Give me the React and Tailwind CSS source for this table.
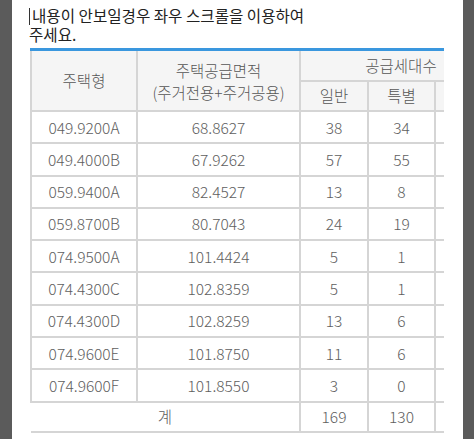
import React from "react";

const rows = [
  ["049.9200A", "68.8627", "38", "34"],
  ["049.4000B", "67.9262", "57", "55"],
  ["059.9400A", "82.4527", "13", "8"],
  ["059.8700B", "80.7043", "24", "19"],
  ["074.9500A", "101.4424", "5", "1"],
  ["074.4300C", "102.8359", "5", "1"],
  ["074.4300D", "102.8259", "13", "6"],
  ["074.9600E", "101.8750", "11", "6"],
  ["074.9600F", "101.8550", "3", "0"],
];

const cell = "border-2 border-[#d5d5d5] text-center p-0";

const App = () => {
  return (
    <div
      className="flex w-[474px] h-[439px] bg-[#5b5b5b] overflow-hidden"
      style={{ fontFamily: '"Noto Sans CJK KR", "Noto Sans", sans-serif' }}
    >
      <div className="ml-[12px] w-[451px] h-full bg-white pl-[17px] pt-[6px]">
        <div className="flex items-start">
          <span className="w-px h-[17px] mt-[2px] bg-[#333] mr-[2px] shrink-0"></span>
          <p className="text-[15.6px] leading-[19px] text-[#222]">
            내용이 안보일경우 좌우 스크롤을 이용하여
            <br />
            <span className="-ml-[3px]">주세요.</span>
          </p>
        </div>
        <div className="mt-[4px] ml-[1px] w-[414px] overflow-hidden border-t-[3px] border-[#3a97de]">
          <table className="border-collapse table-fixed w-[471px] text-[15.5px] font-light text-[#5e5e5e]">
            <colgroup>
              <col className="w-[106px]" />
              <col className="w-[163px]" />
              <col className="w-[68px]" />
              <col className="w-[67px]" />
              <col className="w-[67px]" />
            </colgroup>
            <thead className="bg-[#f5f5f5] text-[#555]">
              <tr className="h-[30px]">
                <th rowSpan={2} className={`${cell} border-t-0 font-light`}>
                  주택형
                </th>
                <th rowSpan={2} className={`${cell} border-t-0 font-light leading-[22px]`}>
                  주택공급면적
                  <br />
                  (주거전용+주거공용)
                </th>
                <th colSpan={3} className={`${cell} border-t-0 font-light`}>
                  공급세대수
                </th>
              </tr>
              <tr className="h-[30px]">
                <th className={`${cell} font-light`}>일반</th>
                <th className={`${cell} font-light`}>특별</th>
                <th className={cell}></th>
              </tr>
            </thead>
            <tbody>
              {rows.map((r) => (
                <tr key={r[0]} className="h-[32.3px]">
                  <td className={cell}>{r[0]}</td>
                  <td className={cell}>{r[1]}</td>
                  <td className={cell}>{r[2]}</td>
                  <td className={cell}>{r[3]}</td>
                  <td className={cell}></td>
                </tr>
              ))}
              <tr className="h-[30px]">
                <td colSpan={2} className={`${cell} border-l-0`}>
                  계
                </td>
                <td className={cell}>169</td>
                <td className={cell}>130</td>
                <td className={cell}></td>
              </tr>
            </tbody>
          </table>
        </div>
      </div>
    </div>
  );
};

export default App;
